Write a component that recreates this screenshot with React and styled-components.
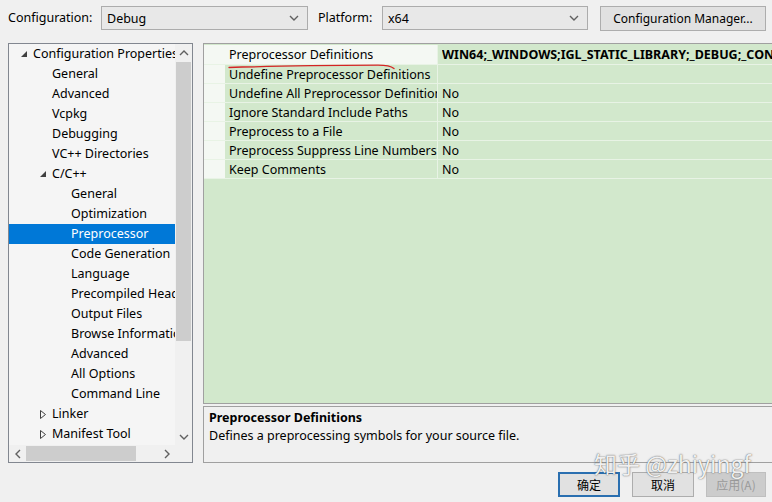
import React from 'react';
import styled, { createGlobalStyle } from 'styled-components';

const GlobalStyle = createGlobalStyle`
  html, body {
    margin: 0;
    padding: 0;
    background: #f0f0f0;
  }
  body {
    font-family: "Noto Sans", "Open Sans", "Noto Sans CJK SC", sans-serif;
    font-size: 12px;
    color: #000;
  }
`;

const treeItems = [
  { label: 'Configuration Properties', level: 0, arrow: 'open' },
  { label: 'General', level: 1 },
  { label: 'Advanced', level: 1 },
  { label: 'Vcpkg', level: 1 },
  { label: 'Debugging', level: 1 },
  { label: 'VC++ Directories', level: 1 },
  { label: 'C/C++', level: 1, arrow: 'open' },
  { label: 'General', level: 2 },
  { label: 'Optimization', level: 2 },
  { label: 'Preprocessor', level: 2, selected: true },
  { label: 'Code Generation', level: 2 },
  { label: 'Language', level: 2 },
  { label: 'Precompiled Headers', level: 2 },
  { label: 'Output Files', level: 2 },
  { label: 'Browse Information', level: 2 },
  { label: 'Advanced', level: 2 },
  { label: 'All Options', level: 2 },
  { label: 'Command Line', level: 2 },
  { label: 'Linker', level: 1, arrow: 'closed' },
  { label: 'Manifest Tool', level: 1, arrow: 'closed' },
];

const props = [
  { name: 'Preprocessor Definitions', value: 'WIN64;_WINDOWS;IGL_STATIC_LIBRARY;_DEBUG;_CONSOLE;%(PreprocessorDefinitions)', bold: true, current: true },
  { name: 'Undefine Preprocessor Definitions', value: '' },
  { name: 'Undefine All Preprocessor Definitions', value: 'No' },
  { name: 'Ignore Standard Include Paths', value: 'No' },
  { name: 'Preprocess to a File', value: 'No' },
  { name: 'Preprocess Suppress Line Numbers', value: 'No' },
  { name: 'Keep Comments', value: 'No' },
];

const Chevron = ({ dir }) => {
  const pts = {
    up: '1,6 5,2 9,6',
    down: '1,2 5,6 9,2',
    left: '6,1 2,5 6,9',
    right: '2,1 6,5 2,9',
  }[dir];
  const w = dir === 'up' || dir === 'down' ? 10 : 8;
  const h = dir === 'up' || dir === 'down' ? 8 : 10;
  return (
    <svg width={w} height={h} viewBox={`0 0 ${w} ${h}`}>
      <polyline points={pts} fill="none" stroke="#606060" strokeWidth="1.4" />
    </svg>
  );
};

const ExpandArrow = ({ type }) =>
  type === 'open' ? (
    <svg width="7" height="7" viewBox="0 0 7 7">
      <polygon points="6,0 6,6 0,6" fill="#404040" />
    </svg>
  ) : (
    <svg width="6" height="9" viewBox="0 0 6 9">
      <polygon points="0.5,0.5 5.5,4.5 0.5,8.5" fill="none" stroke="#404040" strokeWidth="1" />
    </svg>
  );

const App = () => (
  <Page>
    <GlobalStyle />
    <TopBar>
      <Label $w={93}>Configuration:</Label>
      <Select $w={207}>
        <span>Debug</span>
        <Chevron dir="down" />
      </Select>
      <Label $w={64} $gap={10}>Platform:</Label>
      <Select $w={206}>
        <span>x64</span>
        <Chevron dir="down" />
      </Select>
      <ToolButton>Configuration Manager...</ToolButton>
    </TopBar>

    <Main>
      <Tree>
        <TreeBody>
          <TreeList>
            {treeItems.map((it, i) => (
              <TreeRow key={i} $level={it.level} $selected={it.selected}>
                <ArrowSlot>{it.arrow && <ExpandArrow type={it.arrow} />}</ArrowSlot>
                <TreeText>{it.label}</TreeText>
              </TreeRow>
            ))}
          </TreeList>
          <VScroll>
            <ScrollBtn>
              <Chevron dir="up" />
            </ScrollBtn>
            <VTrack>
              <VThumb />
            </VTrack>
            <ScrollBtn>
              <Chevron dir="down" />
            </ScrollBtn>
          </VScroll>
        </TreeBody>
        <HScrollRow>
          <HScroll>
            <HBtn>
              <Chevron dir="left" />
            </HBtn>
            <HTrack>
              <HThumb />
            </HTrack>
            <HBtn>
              <Chevron dir="right" />
            </HBtn>
          </HScroll>
          <Corner />
        </HScrollRow>
      </Tree>

      <RightCol>
        <Grid>
          {props.map((p, i) => (
            <GridRow key={i}>
              <Gutter />
              <NameCell $current={p.current}>
                <CellText>{p.name}</CellText>
              </NameCell>
              <ValueCell $bold={p.bold}>
                <CellText>{p.value}</CellText>
              </ValueCell>
            </GridRow>
          ))}
          <Scribble width="170" height="8" viewBox="0 0 170 8">
            <path
              d="M1 4.5 C 40 3.2, 100 2.4, 150 2.2 C 158 2.2, 163 3.2, 166 5.5"
              fill="none"
              stroke="#d42424"
              strokeWidth="1.3"
              strokeLinecap="round"
            />
          </Scribble>
        </Grid>
        <Description>
          <DescTitle>Preprocessor Definitions</DescTitle>
          <DescText>Defines a preprocessing symbols for your source file.</DescText>
        </Description>
      </RightCol>
    </Main>

    <Footer>
      <DialogButton $primary>确定</DialogButton>
      <DialogButton>取消</DialogButton>
      <DialogButton $disabled $w={60}>应用(A)</DialogButton>
    </Footer>

    <Watermark>知乎 @zhiyingf</Watermark>
  </Page>
);

export default App;

const Page = styled.div`
  position: relative;
  width: 772px;
  height: 502px;
  overflow: hidden;
  background: #f0f0f0;
  box-sizing: border-box;
  padding: 5px 0 0 8px;
  display: flex;
  flex-direction: column;
`;

const TopBar = styled.div`
  display: flex;
  align-items: center;
  height: 26px;
`;

const Label = styled.div`
  width: ${(p) => p.$w}px;
  margin-left: ${(p) => p.$gap || 0}px;
  flex-shrink: 0;
  white-space: nowrap;
  font-size: 12.5px;
  margin-top: -1px;
`;

const Select = styled.div`
  width: ${(p) => p.$w}px;
  height: 24px;
  box-sizing: border-box;
  border: 1px solid #acacac;
  background: #e8e8e8;
  display: flex;
  align-items: center;
  justify-content: space-between;
  padding: 0 8px 0 5px;
  flex-shrink: 0;
  font-size: 12.5px;
`;

const ToolButton = styled.div`
  margin-left: 12px;
  width: 166px;
  height: 25px;
  box-sizing: border-box;
  border: 1px solid #adadad;
  background: #e1e1e1;
  display: flex;
  align-items: center;
  justify-content: center;
  white-space: nowrap;
  flex-shrink: 0;
`;

const Main = styled.div`
  display: flex;
  margin-top: 12px;
  gap: 10px;
`;

const Tree = styled.div`
  width: 185px;
  height: 420px;
  box-sizing: border-box;
  border: 1px solid #828790;
  background: #f5f5f5;
  display: flex;
  flex-direction: column;
  flex-shrink: 0;
`;

const TreeBody = styled.div`
  flex: 1;
  display: flex;
  min-height: 0;
`;

const TreeList = styled.div`
  width: 166px;
  overflow: hidden;
`;

const TreeRow = styled.div`
  height: 20px;
  display: flex;
  align-items: center;
  padding-left: ${(p) => 8 + p.$level * 19}px;
  background: ${(p) => (p.$selected ? '#0078d7' : 'transparent')};
  color: ${(p) => (p.$selected ? '#fff' : '#000')};
  white-space: nowrap;
`;

const ArrowSlot = styled.div`
  width: 16px;
  flex-shrink: 0;
  display: flex;
  align-items: center;
  justify-content: flex-start;
  padding-left: 4px;
  box-sizing: border-box;
`;

const TreeText = styled.span`
  font-size: 12.5px;
  margin-top: -1px;
`;

const VScroll = styled.div`
  width: 17px;
  display: flex;
  flex-direction: column;
  background: #f0f0f0;
`;

const ScrollBtn = styled.div`
  height: 17px;
  display: flex;
  align-items: center;
  justify-content: center;
`;

const VTrack = styled.div`
  flex: 1;
  padding: 1px 1px;
`;

const VThumb = styled.div`
  height: 279px;
  background: #cdcdcd;
`;

const HScrollRow = styled.div`
  height: 17px;
  display: flex;
`;

const HScroll = styled.div`
  width: 166px;
  display: flex;
  background: #f0f0f0;
`;

const HBtn = styled.div`
  width: 17px;
  display: flex;
  align-items: center;
  justify-content: center;
`;

const HTrack = styled.div`
  flex: 1;
  padding: 1px 0;
`;

const HThumb = styled.div`
  width: 110px;
  height: 100%;
  background: #cdcdcd;
`;

const Corner = styled.div`
  flex: 1;
  background: #f0f0f0;
`;

const RightCol = styled.div`
  width: 620px;
  display: flex;
  flex-direction: column;
  gap: 2px;
  flex-shrink: 0;
`;

const Grid = styled.div`
  position: relative;
  height: 361px;
  box-sizing: border-box;
  border: 1px solid #a0a0a0;
  border-right: none;
  padding-top: 1px;
  background: #d2e8cc;
`;

const GridRow = styled.div`
  display: flex;
  height: 19px;
  border-bottom: 1px solid #e8f3e5;
  box-sizing: border-box;
  white-space: nowrap;
  &:first-child {
    height: 20px;
  }
`;

const Gutter = styled.div`
  width: 21px;
  background: #f4f8f3;
  flex-shrink: 0;
`;

const NameCell = styled.div`
  width: 213px;
  flex-shrink: 0;
  overflow: hidden;
  padding-left: 4px;
  box-sizing: border-box;
  border-right: 1px solid #e8f3e5;
  background: ${(p) => (p.$current ? '#f4f8f3' : 'transparent')};
  display: flex;
  align-items: center;
`;

const ValueCell = styled.div`
  flex: 1;
  padding-left: 4px;
  display: flex;
  align-items: center;
  font-weight: ${(p) => (p.$bold ? 700 : 400)};
  overflow: hidden;
`;

const CellText = styled.span`
  font-size: 12.5px;
  overflow: hidden;
  white-space: nowrap;
`;

const Scribble = styled.svg`
  position: absolute;
  left: 24px;
  top: 19px;
`;

const Description = styled.div`
  height: 57px;
  box-sizing: border-box;
  border: 1px solid #a0a0a0;
  border-right: none;
  padding: 2px 0 0 5px;
  background: #f0f0f0;
`;

const DescTitle = styled.div`
  font-weight: 700;
  font-size: 12.5px;
  height: 18px;
  line-height: 18px;
`;

const DescText = styled.div`
  font-size: 12.5px;
  height: 18px;
  line-height: 18px;
`;

const Footer = styled.div`
  display: flex;
  justify-content: flex-end;
  gap: 12px;
  margin-top: 9px;
  padding-right: 6px;
`;

const DialogButton = styled.div`
  width: ${(p) => p.$w || 62}px;
  height: 25px;
  box-sizing: border-box;
  display: flex;
  align-items: center;
  justify-content: center;
  font-family: "Noto Sans CJK SC", "Noto Sans", sans-serif;
  font-size: 12px;
  border: ${(p) => (p.$primary ? '2px solid #2a6fb0' : '1px solid #adadad')};
  background: ${(p) => (p.$disabled ? '#cccccc' : '#e1e1e1')};
  color: ${(p) => (p.$disabled ? '#9a9a9a' : '#000')};
  border-color: ${(p) => (p.$disabled ? '#bfbfbf' : undefined)};
`;

const Watermark = styled.div`
  position: absolute;
  left: 594px;
  top: 446px;
  font-family: "Noto Sans CJK SC", "Noto Sans", sans-serif;
  font-size: 23px;
  color: rgba(255, 255, 255, 0.92);
  text-shadow: 0 0 1px rgba(60, 60, 60, 0.8), 0 0 2px rgba(90, 90, 90, 0.5);
  white-space: nowrap;
  pointer-events: none;
`;
